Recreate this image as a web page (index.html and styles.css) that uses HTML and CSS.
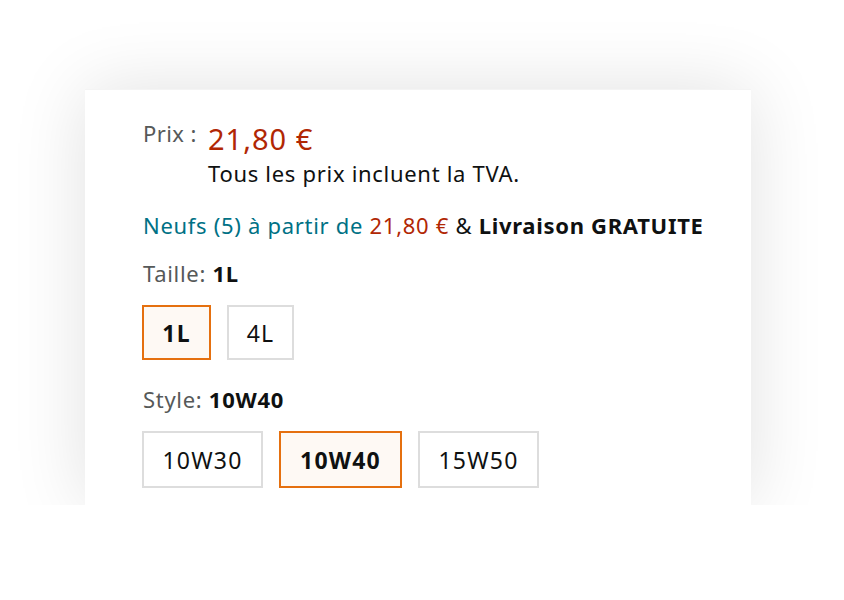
FILE: index.html
```html
<!DOCTYPE html>
<html lang="fr">
<head>
<meta charset="utf-8">
<link rel="stylesheet" href="styles.css">
</head>
<body>
<div class="card">
  <div class="price-row">
    <span class="label">Prix :</span>
    <div class="price-col">
      <span class="price">21,80 €</span>
      <span class="tva">Tous les prix incluent la TVA.</span>
    </div>
  </div>
  <div class="offers"><span class="link">Neufs (5) à partir de </span><span class="red">21,80 €</span> &amp; <b>Livraison GRATUITE</b></div>
  <div class="variation">
    <div class="var-label"><span class="label">Taille: </span><b>1L</b></div>
    <div class="swatches">
      <div class="swatch sel small">1L</div>
      <div class="swatch small">4L</div>
    </div>
  </div>
  <div class="variation style">
    <div class="var-label"><span class="label">Style: </span><b>10W40</b></div>
    <div class="swatches">
      <div class="swatch wide">10W30</div>
      <div class="swatch sel wide">10W40</div>
      <div class="swatch wide">15W50</div>
    </div>
  </div>
</div>
</body>
</html>
```
FILE: styles.css
```css
html, body {
  margin: 0;
  padding: 0;
  background: #ffffff;
}
body {
  font-family: "Noto Sans", "Liberation Sans", sans-serif;
  color: #0f1111;
  font-size: 22px;
  letter-spacing: 0.7px;
}
.card {
  margin: 89px 0 0 85px;
  width: 666px;
  height: 416px;
  box-sizing: border-box;
  padding: 32px 0 0 58px;
  background: #fff;
  box-shadow: 0 0 70px rgba(0, 0, 0, 0.12);
  border-top: 1px solid #f4f4f4;
}
.price-row {
  display: flex;
}
.label {
  color: #565959;
}
.price-row > .label {
  width: 65px;
  line-height: 23px;
  letter-spacing: 0.4px;
}
.price-col {
  display: flex;
  flex-direction: column;
}
.price {
  color: #b12704;
  font-size: 29px;
  line-height: 34px;
  letter-spacing: 1px;
}
.tva {
  margin-top: 2px;
  line-height: 30px;
}
.offers {
  margin-top: 22px;
  line-height: 30px;
}
.link { color: #007185; }
.red { color: #b12704; }
b { font-weight: 700; }
.variation {
  margin-top: 18px;
}
.var-label {
  line-height: 30px;
}
.swatches {
  display: flex;
  gap: 16px;
  margin-top: 17px;
  margin-left: -1px;
}
.swatch {
  box-sizing: border-box;
  height: 55px;
  border: 2px solid #dddddd;
  display: flex;
  align-items: center;
  justify-content: center;
  background: #fff;
  font-size: 23px;
  letter-spacing: 1.2px;
}
.swatch.small { width: 67px; }
.swatch.sel.small { width: 69px; }
.swatch.wide { width: 121px; height: 57px; }
.swatch.sel.wide { width: 123px; }
.swatch.sel {
  border-color: #e5700f;
  background: #fef9f4;
  font-weight: 700;
}
.style {
  margin-top: 24px;
}
```
